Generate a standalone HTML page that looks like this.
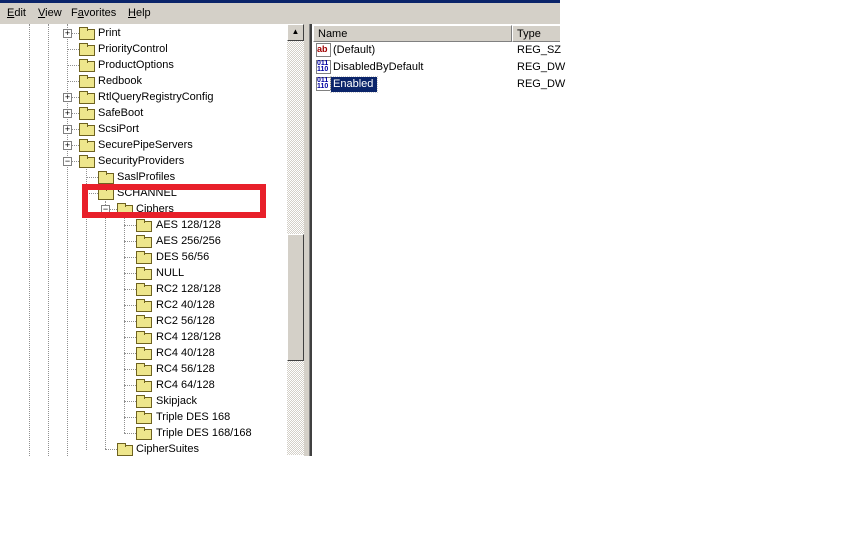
<!DOCTYPE html>
<html><head><style>
*{margin:0;padding:0;box-sizing:border-box}
body{width:864px;height:540px;background:#fff;position:relative;overflow:hidden;font-family:"Liberation Sans",Tahoma,sans-serif;font-size:11px;color:#000}
.a{position:absolute}
.vl{position:absolute;width:1px;border-left:1px dotted #909090}
.hl{position:absolute;height:1px;border-top:1px dotted #909090}
.f{position:absolute;width:16px;height:11px;margin-top:1px;background:#eee68c;border:1px solid #6e6220}
.f:before{content:"";position:absolute;left:-1px;top:-3px;width:7px;height:3px;background:#eee68c;border:1px solid #6e6220;border-bottom:none}
.bx{position:absolute;width:9px;height:9px;border:1px solid #808080;background:#fff;font-size:9px;line-height:6px;text-align:center;color:#000}
.t{position:absolute;white-space:nowrap;line-height:14px;top:1px}
.r{position:absolute;left:0;width:300px;height:16px}
</style></head><body>
<div class="a" style="left:0;top:0;width:560px;height:3px;background:#0a246a"></div>
<div class="a" style="left:0;top:3px;width:560px;height:21px;background:#d4d0c8"></div>
<div class="t" style="left:7px;top:6px"><u>E</u>dit</div>
<div class="t" style="left:38px;top:6px"><u>V</u>iew</div>
<div class="t" style="left:71px;top:6px">F<u>a</u>vorites</div>
<div class="t" style="left:128px;top:6px"><u>H</u>elp</div>
<div class="a" style="left:0;top:24px;width:560px;height:432px;background:#d4d0c8"></div>
<div class="a" style="left:0;top:24px;width:304px;height:432px;background:#fff"></div>
<div class="a" style="left:287px;top:24px;width:17px;height:431px;background:repeating-conic-gradient(#fff 0 25%,#d4d0c8 0 50%) 0 0/2px 2px"></div>
<div class="a" style="left:287px;top:24px;width:17px;height:17px;background:#d4d0c8;border:1px solid;border-color:#fff #404040 #404040 #fff;font-size:8px;text-align:center;line-height:14px">▲</div>
<div class="a" style="left:287px;top:234px;width:17px;height:127px;background:#d4d0c8;border:1px solid;border-color:#fff #404040 #404040 #fff"></div>
<div class="a" style="left:309px;top:24px;width:2px;height:432px;background:#808080;border-right:1px solid #404040"></div>
<div class="a" style="left:311px;top:24px;width:249px;height:432px;background:#fff;border-left:1px solid #404040"></div>
<div class="a" style="left:313px;top:25px;width:199px;height:17px;background:#d4d0c8;border:1px solid;border-color:#fff #808080 #808080 #fff"></div>
<div class="a" style="left:512px;top:25px;width:48px;height:17px;background:#d4d0c8;border-top:1px solid #fff;border-left:1px solid #fff;border-bottom:1px solid #808080"></div>
<div class="t" style="left:318px;top:27px">Name</div>
<div class="t" style="left:517px;top:27px">Type</div>
<div class="a" style="left:316px;top:43px;width:15px;height:14px;border:1px solid #808080;background:#fff;color:#a00000;font-weight:bold;font-size:9px;line-height:10px">ab</div>
<div class="t" style="left:333px;top:43px">(Default)</div>
<div class="t" style="left:517px;top:43px">REG_SZ</div>
<div class="a" style="left:316px;top:60px;width:15px;height:14px;border:1px solid #808080;background:#fff;color:#0000a0;font-weight:bold;font-size:7px;line-height:6px">011<br>110</div>
<div class="t" style="left:333px;top:60px">DisabledByDefault</div>
<div class="t" style="left:517px;top:60px">REG_DW</div>
<div class="a" style="left:316px;top:77px;width:15px;height:14px;border:1px solid #808080;background:#fff;color:#0000a0;font-weight:bold;font-size:7px;line-height:6px">011<br>110</div>
<div class="a" style="left:331px;top:77px;width:46px;height:15px;background:#0a246a;outline:1px dotted #ccc"></div>
<div class="t" style="left:333px;top:77px;color:#fff">Enabled</div>
<div class="t" style="left:517px;top:77px">REG_DW</div>
<div class="vl" style="left:29px;top:24px;height:432px"></div>
<div class="vl" style="left:48px;top:24px;height:432px"></div>
<div class="vl" style="left:67px;top:24px;height:432px"></div>
<div class="vl" style="left:86px;top:169px;height:281px"></div>
<div class="vl" style="left:105px;top:201px;height:248px"></div>
<div class="vl" style="left:124px;top:217px;height:216px"></div>
<div class="hl" style="left:67px;top:33px;width:12px"></div><div class="bx" style="left:63px;top:29px">+</div><div class="f" style="left:79px;top:28px"></div><div class="t" style="left:98px;top:26px">Print</div>
<div class="hl" style="left:67px;top:49px;width:12px"></div><div class="f" style="left:79px;top:44px"></div><div class="t" style="left:98px;top:42px">PriorityControl</div>
<div class="hl" style="left:67px;top:65px;width:12px"></div><div class="f" style="left:79px;top:60px"></div><div class="t" style="left:98px;top:58px">ProductOptions</div>
<div class="hl" style="left:67px;top:81px;width:12px"></div><div class="f" style="left:79px;top:76px"></div><div class="t" style="left:98px;top:74px">Redbook</div>
<div class="hl" style="left:67px;top:97px;width:12px"></div><div class="bx" style="left:63px;top:93px">+</div><div class="f" style="left:79px;top:92px"></div><div class="t" style="left:98px;top:90px">RtlQueryRegistryConfig</div>
<div class="hl" style="left:67px;top:113px;width:12px"></div><div class="bx" style="left:63px;top:109px">+</div><div class="f" style="left:79px;top:108px"></div><div class="t" style="left:98px;top:106px">SafeBoot</div>
<div class="hl" style="left:67px;top:129px;width:12px"></div><div class="bx" style="left:63px;top:125px">+</div><div class="f" style="left:79px;top:124px"></div><div class="t" style="left:98px;top:122px">ScsiPort</div>
<div class="hl" style="left:67px;top:145px;width:12px"></div><div class="bx" style="left:63px;top:141px">+</div><div class="f" style="left:79px;top:140px"></div><div class="t" style="left:98px;top:138px">SecurePipeServers</div>
<div class="hl" style="left:67px;top:161px;width:12px"></div><div class="bx" style="left:63px;top:157px">−</div><div class="f" style="left:79px;top:156px"></div><div class="t" style="left:98px;top:154px">SecurityProviders</div>
<div class="hl" style="left:86px;top:177px;width:12px"></div><div class="f" style="left:98px;top:172px"></div><div class="t" style="left:117px;top:170px">SaslProfiles</div>
<div class="hl" style="left:86px;top:193px;width:12px"></div><div class="f" style="left:98px;top:188px"></div><div class="t" style="left:117px;top:186px">SCHANNEL</div>
<div class="hl" style="left:105px;top:209px;width:12px"></div><div class="bx" style="left:101px;top:205px">−</div><div class="f" style="left:117px;top:204px"></div><div class="t" style="left:136px;top:202px">Ciphers</div>
<div class="hl" style="left:124px;top:225px;width:12px"></div><div class="f" style="left:136px;top:220px"></div><div class="t" style="left:156px;top:218px">AES 128/128</div>
<div class="hl" style="left:124px;top:241px;width:12px"></div><div class="f" style="left:136px;top:236px"></div><div class="t" style="left:156px;top:234px">AES 256/256</div>
<div class="hl" style="left:124px;top:257px;width:12px"></div><div class="f" style="left:136px;top:252px"></div><div class="t" style="left:156px;top:250px">DES 56/56</div>
<div class="hl" style="left:124px;top:273px;width:12px"></div><div class="f" style="left:136px;top:268px"></div><div class="t" style="left:156px;top:266px">NULL</div>
<div class="hl" style="left:124px;top:289px;width:12px"></div><div class="f" style="left:136px;top:284px"></div><div class="t" style="left:156px;top:282px">RC2 128/128</div>
<div class="hl" style="left:124px;top:305px;width:12px"></div><div class="f" style="left:136px;top:300px"></div><div class="t" style="left:156px;top:298px">RC2 40/128</div>
<div class="hl" style="left:124px;top:321px;width:12px"></div><div class="f" style="left:136px;top:316px"></div><div class="t" style="left:156px;top:314px">RC2 56/128</div>
<div class="hl" style="left:124px;top:337px;width:12px"></div><div class="f" style="left:136px;top:332px"></div><div class="t" style="left:156px;top:330px">RC4 128/128</div>
<div class="hl" style="left:124px;top:353px;width:12px"></div><div class="f" style="left:136px;top:348px"></div><div class="t" style="left:156px;top:346px">RC4 40/128</div>
<div class="hl" style="left:124px;top:369px;width:12px"></div><div class="f" style="left:136px;top:364px"></div><div class="t" style="left:156px;top:362px">RC4 56/128</div>
<div class="hl" style="left:124px;top:385px;width:12px"></div><div class="f" style="left:136px;top:380px"></div><div class="t" style="left:156px;top:378px">RC4 64/128</div>
<div class="hl" style="left:124px;top:401px;width:12px"></div><div class="f" style="left:136px;top:396px"></div><div class="t" style="left:156px;top:394px">Skipjack</div>
<div class="hl" style="left:124px;top:417px;width:12px"></div><div class="f" style="left:136px;top:412px"></div><div class="t" style="left:156px;top:410px">Triple DES 168</div>
<div class="hl" style="left:124px;top:433px;width:12px"></div><div class="f" style="left:136px;top:428px"></div><div class="t" style="left:156px;top:426px">Triple DES 168/168</div>
<div class="hl" style="left:105px;top:449px;width:12px"></div><div class="f" style="left:117px;top:444px"></div><div class="t" style="left:136px;top:442px">CipherSuites</div>
<div class="a" style="left:82px;top:184px;width:184px;height:34px;border:6px solid #e8202a"></div>
</body></html>
